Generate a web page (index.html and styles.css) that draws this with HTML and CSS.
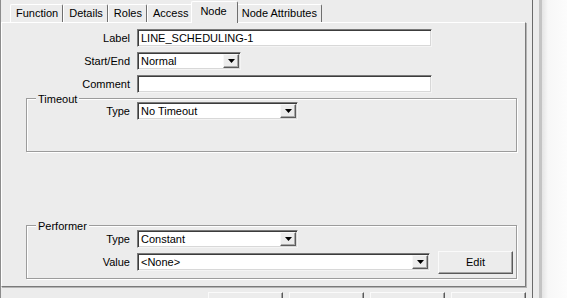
FILE: index.html
```html
<!DOCTYPE html>
<html lang="en">
<head>
    <meta charset="UTF-8">
    <title>Node Properties</title>
    <link rel="stylesheet" href="styles.css">
</head>
<body>
    <div class="screen">
        <div class="window">
            <div class="tabs">
                <div class="tab">Function</div>
                <div class="tab">Details</div>
                <div class="tab">Roles</div>
                <div class="tab">Access</div>
                <div class="tab active">Node</div>
                <div class="tab">Node Attributes</div>
            </div>

            <div class="panel">
                <div class="row">
                    <span class="lbl">Label</span>
                    <div class="field w-label"><span class="val">LINE_SCHEDULING-1</span></div>
                </div>
                <div class="row">
                    <span class="lbl">Start/End</span>
                    <div class="field combo w-short">
                        <span class="val">Normal</span>
                        <span class="drop"><svg width="7" height="4" viewBox="0 0 7 4"><path d="M0 0h7L3.5 4z"/></svg></span>
                    </div>
                </div>
                <div class="row">
                    <span class="lbl">Comment</span>
                    <div class="field w-label"></div>
                </div>

                <div class="group timeout">
                    <span class="group-title">Timeout</span>
                    <div class="row">
                        <span class="lbl">Type</span>
                        <div class="field combo w-mid">
                            <span class="val">No Timeout</span>
                            <span class="drop"><svg width="7" height="4" viewBox="0 0 7 4"><path d="M0 0h7L3.5 4z"/></svg></span>
                        </div>
                    </div>
                </div>

                <div class="group performer">
                    <span class="group-title">Performer</span>
                    <div class="row">
                        <span class="lbl">Type</span>
                        <div class="field combo w-mid">
                            <span class="val">Constant</span>
                            <span class="drop"><svg width="7" height="4" viewBox="0 0 7 4"><path d="M0 0h7L3.5 4z"/></svg></span>
                        </div>
                    </div>
                    <div class="row">
                        <span class="lbl">Value</span>
                        <div class="field combo w-value">
                            <span class="val">&lt;None&gt;</span>
                            <span class="drop"><svg width="7" height="4" viewBox="0 0 7 4"><path d="M0 0h7L3.5 4z"/></svg></span>
                        </div>
                        <button class="btn edit-btn">Edit</button>
                    </div>
                </div>
            </div>

            <div class="buttons">
                <button class="btn"></button>
                <button class="btn"></button>
                <button class="btn"></button>
                <button class="btn"></button>
            </div>
        </div>
        <div class="frame"></div>
        <div class="desk"></div>
    </div>
</body>
</html>
```

FILE: styles.css
```css
* {
    margin: 0;
    padding: 0;
    box-sizing: border-box;
}

body {
    font-family: 'Liberation Sans', Arial, sans-serif;
    font-size: 11px;
    color: #000;
    background-color: #ececec;
    width: 567px;
    height: 298px;
    overflow: hidden;
}

.screen {
    display: flex;
    height: 298px;
}

.window {
    width: 533px;
    height: 298px;
    border-left: 1px solid #8c8c8c;
    border-right: 1px solid #6a6a6a;
    background: #ececec;
}

.frame {
    width: 9px;
    background: #ececec;
    border-right: 3px solid #c4c4c4;
}

.desk {
    flex: 1;
    background: linear-gradient(to right, #e4e4e4, #f7f7f7 6px, #fcfcfc);
}

/* tab strip */
.tabs {
    display: flex;
    align-items: flex-end;
    height: 22px;
    padding-left: 9px;
}

.tab {
    height: 18px;
    line-height: 17px;
    padding: 0 4px 0 5px;
    border-top: 1px solid #fff;
    border-left: 1px solid #fff;
    border-right: 1px solid #6f6f6f;
    border-radius: 2px 2px 0 0;
    white-space: nowrap;
}

.tab.active {
    position: relative;
    z-index: 1;
    height: 22px;
    line-height: 17px;
    margin: 0 -2px -1px;
    padding: 1px 10px 2px 8px;
    background: #ececec;
}

/* page */
.panel {
    width: 525px;
    height: 265px;
    padding-top: 6px;
    border-top: 1px solid #fff;
    border-left: 1px solid #fff;
    border-right: 1px solid #7a7a7a;
    border-bottom: 1px solid #7a7a7a;
    box-shadow: 1px 1px 0 #b4b4b4;
}

.row {
    display: flex;
    align-items: center;
    height: 18px;
    margin-bottom: 5px;
}

.lbl {
    width: 135px;
    padding-right: 7px;
    text-align: right;
    white-space: nowrap;
}

.field {
    display: flex;
    align-items: center;
    height: 18px;
    background: #fff;
    border: 1px solid;
    border-color: #7a7a7a #f4f4f4 #f4f4f4 #7a7a7a;
    box-shadow: inset 1px 1px 0 #3c3c3c, inset -1px -1px 0 #d8d8d8;
}

.val {
    flex: 1;
    padding-left: 3px;
    white-space: nowrap;
}

.drop {
    width: 16px;
    height: 14px;
    margin-right: 1px;
    display: flex;
    align-items: center;
    justify-content: center;
    background: #ececec;
    border: 1px solid;
    border-color: #f8f8f8 #5c5c5c #5c5c5c #f8f8f8;
    box-shadow: inset -1px -1px 0 #a8a8a8;
}

.w-label { width: 295px; }
.w-short { width: 104px; }
.w-mid { width: 161px; }
.w-value { width: 293px; }

/* group boxes */
.group {
    position: relative;
    width: 491px;
    height: 54px;
    margin-left: 24px;
    border: 1px solid #9c9c9c;
    box-shadow: 1px 1px 0 #fff, inset 1px 1px 0 #fff;
}

.group .lbl {
    width: 110px;
}

.group-title {
    position: absolute;
    top: -6px;
    left: 9px;
    padding: 0 2px;
    line-height: 13px;
    background: #ececec;
}

.timeout {
    margin-top: 2px;
    padding-top: 3px;
}

.performer {
    margin-top: 73px;
    padding-top: 4px;
}

/* buttons */
.btn {
    font: inherit;
    color: #000;
    width: 75px;
    height: 23px;
    flex-shrink: 0;
    background: #ececec;
    border: 1px solid;
    border-color: #fafafa #5a5a5a #5a5a5a #fafafa;
    box-shadow: inset -1px -1px 0 #a4a4a4;
}

.edit-btn {
    margin-left: 8px;
}

.buttons {
    display: flex;
    justify-content: flex-end;
    gap: 6px;
    height: 11px;
    overflow: hidden;
    padding: 5px 6px 0 0;
}
```
